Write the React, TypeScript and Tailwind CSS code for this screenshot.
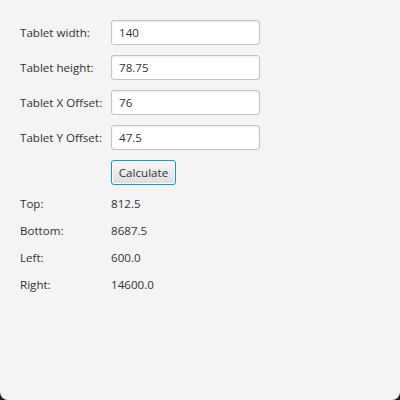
const inputs = [
  { label: "Tablet width:", value: "140" },
  { label: "Tablet height:", value: "78.75" },
  { label: "Tablet X Offset:", value: "76" },
  { label: "Tablet Y Offset:", value: "47.5" },
];

const results = [
  { label: "Top:", value: "812.5" },
  { label: "Bottom:", value: "8687.5" },
  { label: "Left:", value: "600.0" },
  { label: "Right:", value: "14600.0" },
];

export default function App() {
  return (
    <div className="w-[400px] h-[400px] bg-[#1e1e1e]">
      <div
        className="w-[400px] h-[400px] bg-[#f4f4f4] rounded-b-[8px] pt-[20px] pl-[20px] text-[11.6px] text-[#333333]"
        style={{ fontFamily: '"Segoe UI", "Open Sans", "Noto Sans", sans-serif' }}
      >
        <div className="grid grid-cols-[91px_149px] gap-y-[10px]">
          {inputs.map((row) => (
            <div key={row.label} className="contents">
              <div className="h-[25px] flex items-center">{row.label}</div>
              <input
                readOnly
                value={row.value}
                className="h-[25px] w-[149px] rounded-[3px] border border-[#c3c3c3] bg-white px-[7px] text-[11.6px] text-[#333333] outline-none shadow-[inset_0_1px_2px_rgba(0,0,0,0.08)]"
              />
            </div>
          ))}
          <div />
          <div>
            <button className="h-[25px] w-[65px] rounded-[3px] border border-[#039ed3] bg-gradient-to-b from-[#f8f8f8] to-[#dddddd] text-[11.6px] text-[#333333] shadow-[inset_0_0_0_1px_#ffffff]">
              Calculate
            </button>
          </div>
          {results.map((row) => (
            <div key={row.label} className="contents">
              <div className="h-[17px] flex items-center">{row.label}</div>
              <div className="h-[17px] flex items-center">{row.value}</div>
            </div>
          ))}
        </div>
      </div>
    </div>
  );
}
